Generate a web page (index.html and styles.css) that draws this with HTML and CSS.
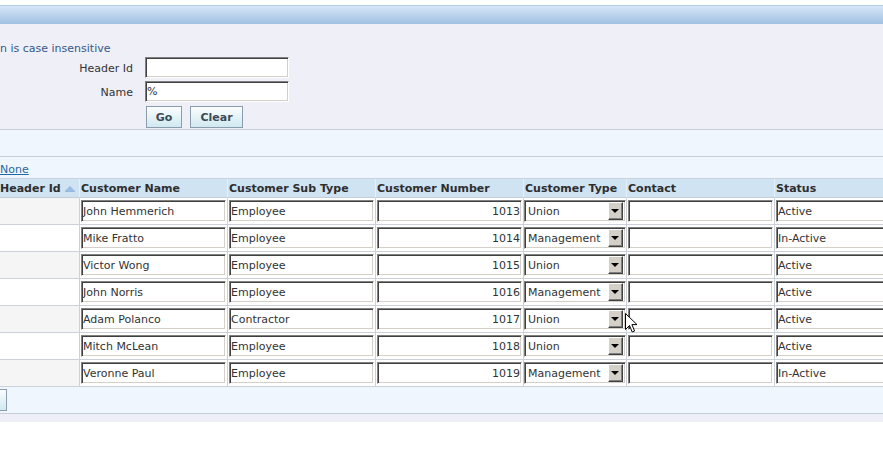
FILE: index.html
```html
<!DOCTYPE html>
<html>
<head>
<meta charset="utf-8">
<link rel="stylesheet" href="styles.css">
</head>
<body>
<div class="page">
  <div class="topgap"></div>
  <div class="titlebar"></div>
  <div class="search">
    <div class="hint">n is case insensitive</div>
    <div class="form">
      <label class="lbl">Header Id</label>
      <input class="sinput" type="text" value="">
      <label class="lbl">Name</label>
      <input class="sinput" type="text" value="%">
      <span></span>
      <div class="btns">
        <button class="btn go">Go</button>
        <button class="btn clear">Clear</button>
      </div>
    </div>
  </div>
  <div class="band"></div>
  <div class="selbar"><a class="link" href="#">None</a></div>
  <div class="grid">
    <div class="th first">Header Id<svg class="sort" width="10" height="6" viewBox="0 0 10 6"><path d="M0 5.5 L5 0.5 L10 5.5 Z" fill="#9cc0e3" stroke="#7fa8d3" stroke-width="0.6"/></svg></div>
    <div class="th">Customer Name</div>
    <div class="th">Customer Sub Type</div>
    <div class="th">Customer Number</div>
    <div class="th">Customer Type</div>
    <div class="th">Contact</div>
    <div class="th">Status</div>

    <div class="td c0 alt"></div>
    <div class="td"><input class="inp" value="John Hemmerich"></div>
    <div class="td"><input class="inp" value="Employee"></div>
    <div class="td"><input class="inp num" value="1013"></div>
    <div class="td tc"><div class="sel"><span class="selv">Union</span><span class="selb"><i class="tri"></i></span></div></div>
    <div class="td"><input class="inp" value=""></div>
    <div class="td"><input class="inp" value="Active"></div>

    <div class="td c0"></div>
    <div class="td"><input class="inp" value="Mike Fratto"></div>
    <div class="td"><input class="inp" value="Employee"></div>
    <div class="td"><input class="inp num" value="1014"></div>
    <div class="td tc"><div class="sel"><span class="selv">Management</span><span class="selb"><i class="tri"></i></span></div></div>
    <div class="td"><input class="inp" value=""></div>
    <div class="td"><input class="inp" value="In-Active"></div>

    <div class="td c0 alt"></div>
    <div class="td"><input class="inp" value="Victor Wong"></div>
    <div class="td"><input class="inp" value="Employee"></div>
    <div class="td"><input class="inp num" value="1015"></div>
    <div class="td tc"><div class="sel"><span class="selv">Union</span><span class="selb"><i class="tri"></i></span></div></div>
    <div class="td"><input class="inp" value=""></div>
    <div class="td"><input class="inp" value="Active"></div>

    <div class="td c0"></div>
    <div class="td"><input class="inp" value="John Norris"></div>
    <div class="td"><input class="inp" value="Employee"></div>
    <div class="td"><input class="inp num" value="1016"></div>
    <div class="td tc"><div class="sel"><span class="selv">Management</span><span class="selb"><i class="tri"></i></span></div></div>
    <div class="td"><input class="inp" value=""></div>
    <div class="td"><input class="inp" value="Active"></div>

    <div class="td c0 alt"></div>
    <div class="td"><input class="inp" value="Adam Polanco"></div>
    <div class="td"><input class="inp" value="Contractor"></div>
    <div class="td"><input class="inp num" value="1017"></div>
    <div class="td tc"><div class="sel"><span class="selv">Union</span><span class="selb"><i class="tri"></i></span></div></div>
    <div class="td"><input class="inp" value=""></div>
    <div class="td"><input class="inp" value="Active"></div>

    <div class="td c0"></div>
    <div class="td"><input class="inp" value="Mitch McLean"></div>
    <div class="td"><input class="inp" value="Employee"></div>
    <div class="td"><input class="inp num" value="1018"></div>
    <div class="td tc"><div class="sel"><span class="selv">Union</span><span class="selb"><i class="tri"></i></span></div></div>
    <div class="td"><input class="inp" value=""></div>
    <div class="td"><input class="inp" value="Active"></div>

    <div class="td c0 alt"></div>
    <div class="td"><input class="inp" value="Veronne Paul"></div>
    <div class="td"><input class="inp" value="Employee"></div>
    <div class="td"><input class="inp num" value="1019"></div>
    <div class="td tc"><div class="sel"><span class="selv">Management</span><span class="selb"><i class="tri"></i></span></div></div>
    <div class="td"><input class="inp" value=""></div>
    <div class="td"><input class="inp" value="In-Active"></div>
  </div>
  <div class="footer"><button class="btn fbtn" aria-label="Add"></button></div>
  <div class="strip"></div>
  <svg class="cursor" width="13" height="21" viewBox="0 0 13 21"><path d="M0.5 0.5 L0.5 16.5 L4.5 12.5 L7.2 19 L9.6 18 L6.9 11.6 L12 11.6 Z" fill="#fff" stroke="#000" stroke-width="1" stroke-linejoin="miter"/></svg>
</div>
</body>
</html>
```
FILE: styles.css
```css
html, body {
  margin: 0;
  padding: 0;
  width: 883px;
  height: 464px;
  overflow: hidden;
  background: #ffffff;
}
.page {
  position: relative;
  width: 883px;
  font-family: "DejaVu Sans", Verdana, sans-serif;
  font-size: 11px;
  color: #333333;
}
.topgap {
  height: 5px;
  background: #ffffff;
}
.titlebar {
  height: 18px;
  border-top: 1px solid #b6cbe6;
  background: linear-gradient(#d6e6f6, #9fc1e4);
}
.search {
  height: 87px;
  padding-top: 18px;
  background: #eeeff7;
  border-bottom: 1px solid #c8cfdc;
}
.hint {
  height: 13px;
  line-height: 13px;
  color: #36588b;
  font-size: 11px;
  white-space: nowrap;
}
.form {
  margin-top: 2px;
  display: grid;
  grid-template-columns: 133px 144px;
  column-gap: 12px;
  row-gap: 3px;
  align-items: center;
}
.lbl {
  text-align: right;
  color: #333;
  white-space: nowrap;
  padding-top: 1px;
}
.sinput, .inp {
  box-sizing: border-box;
  margin: 0;
  padding: 0 1px;
  font-family: "DejaVu Sans", Verdana, sans-serif;
  font-size: 11px;
  color: #333;
  background: #fff;
  border: 1px solid;
  border-color: #808080 #ffffff #ffffff #808080;
  box-shadow: inset 1px 1px 0 #404040, inset -1px -1px 0 #d4d0c8;
  outline: none;
}
.sinput {
  width: 144px;
  height: 21px;
}
.btns {
  display: flex;
  gap: 8px;
  margin-top: 1px;
  margin-left: 1px;
}
.btn {
  box-sizing: border-box;
  height: 22px;
  margin: 0;
  padding: 0;
  border: 1px solid #8a9cae;
  background: linear-gradient(#fbfdfe, #cfe9f0);
  font-family: "DejaVu Sans", Verdana, sans-serif;
  font-size: 11px;
  font-weight: bold;
  color: #3d4a57;
}
.go { width: 36px; }
.clear { width: 53px; }
.band {
  height: 26px;
  background: #f0f6fd;
  border-bottom: 1px solid #c8cfdc;
}
.selbar {
  height: 21px;
  background: #f0f6fd;
  border-bottom: 1px solid #c8d2df;
}
.link {
  display: inline-block;
  margin-top: 6px;
  line-height: 13px;
  color: #1f6aa0;
  text-decoration: underline;
}
.grid {
  display: grid;
  grid-template-columns: 80px 148px 148px 148px 103px 148px 148px;
  width: 923px;
}
.th {
  box-sizing: border-box;
  height: 19px;
  padding-left: 1px;
  padding-top: 1px;
  line-height: 18px;
  background: #cfe3f3;
  border-right: 1px solid #e6eef7;
  border-bottom: 1px solid #c4ccd8;
  font-weight: bold;
  color: #2e2e2e;
  white-space: nowrap;
  overflow: hidden;
}
.th.first {
  padding-left: 0;
  display: flex;
  align-items: center;
  gap: 4px;
}
.sort {
  display: block;
}
.td {
  box-sizing: border-box;
  height: 27px;
  padding-left: 1px;
  display: flex;
  align-items: center;
  background: #ffffff;
  border-right: 1px solid #cbd0da;
  border-bottom: 1px solid #cbd0da;
}
.td.c0 {
  padding-left: 0;
}
.td.c0.alt {
  background: #f5f5f5;
}
.td.tc {
  padding-left: 0;
}
.inp {
  width: 145px;
  height: 22px;
}
.inp.num {
  text-align: right;
}
.sel {
  box-sizing: border-box;
  width: 102px;
  height: 22px;
  display: flex;
  align-items: center;
  justify-content: space-between;
  background: #fff;
  border: 1px solid;
  border-color: #808080 #ffffff #ffffff #808080;
  box-shadow: inset 1px 1px 0 #404040, inset -1px -1px 0 #d4d0c8;
  padding: 0 2px 0 3px;
}
.selv {
  color: #333;
  white-space: nowrap;
}
.selb {
  box-sizing: border-box;
  width: 15px;
  height: 18px;
  background: #d4d0c8;
  border: 1px solid;
  border-color: #ffffff #404040 #404040 #ffffff;
  box-shadow: inset -1px -1px 0 #808080;
  display: flex;
  align-items: center;
  justify-content: center;
}
.tri {
  width: 0;
  height: 0;
  border-left: 4px solid transparent;
  border-right: 4px solid transparent;
  border-top: 4px solid #000;
  margin-left: -1px;
}
.footer {
  height: 26px;
  background: #f0f6fd;
  border-bottom: 1px solid #c8cfdc;
  display: flex;
  align-items: center;
}
.fbtn {
  width: 40px;
  margin-left: -33px;
}
.strip {
  height: 8px;
  background: #eeeef6;
}
.cursor {
  position: absolute;
  left: 625px;
  top: 313px;
}
```
